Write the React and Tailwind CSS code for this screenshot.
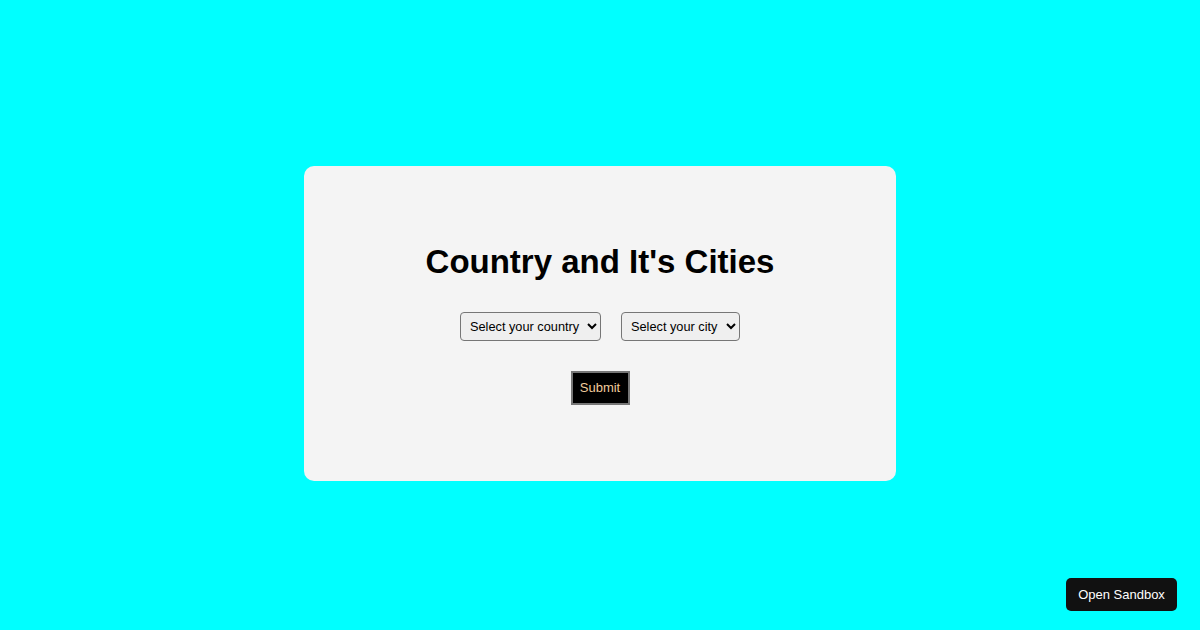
import { useState } from 'react';

const countries = {
  India: ['Delhi', 'Mumbai', 'Bangalore'],
  Pakistan: ['Lahore', 'Karachi', 'Islamabad'],
  Bangladesh: ['Dhaka', 'Chittagong', 'Khulna'],
};

export default function App() {
  const [country, setCountry] = useState('');
  const [city, setCity] = useState('');

  const cities = country ? countries[country] : [];

  return (
    <div className="relative flex h-[630px] w-full items-center justify-center bg-[#00ffff] pt-[17px] font-['Liberation_Sans',Arial,sans-serif]">
      <div className="flex h-[315px] w-[592px] flex-col items-center rounded-[10px] bg-[#f4f4f4] pt-[77px]">
        <h1 className="text-[33px] leading-[37px] font-bold text-black">
          Country and It's Cities
        </h1>

        {/* Dropdowns */}
        <div className="mt-[32px] flex gap-[20px]">
          <select
            value={country}
            onChange={(e) => {
              setCountry(e.target.value);
              setCity('');
            }}
            className="h-[29px] w-[141px] rounded-[4px] border border-[#767676] bg-[#efefef] pl-[5px] text-[12.75px] text-black"
          >
            <option value="">Select your country</option>
            {Object.keys(countries).map((name) => (
              <option key={name} value={name}>
                {name}
              </option>
            ))}
          </select>
          <select
            value={city}
            onChange={(e) => setCity(e.target.value)}
            className="h-[29px] w-[119px] rounded-[4px] border border-[#767676] bg-[#efefef] pl-[5px] text-[12.75px] text-black"
          >
            <option value="">Select your city</option>
            {cities.map((name) => (
              <option key={name} value={name}>
                {name}
              </option>
            ))}
          </select>
        </div>

        {/* Submit */}
        <button
          type="button"
          className="mt-[30px] h-[34px] w-[59px] border-2 border-[#767676] bg-black text-[13px] text-[#f0cc9c]"
        >
          Submit
        </button>
      </div>

      <button
        type="button"
        className="absolute right-[23px] bottom-[19px] h-[33px] w-[111px] rounded-[5px] bg-[#111111] text-[13px] text-white"
      >
        Open Sandbox
      </button>
    </div>
  );
}
